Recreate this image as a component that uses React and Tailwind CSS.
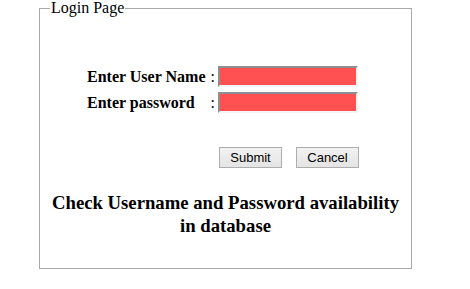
import React from 'react';

const serif = { fontFamily: '"Liberation Serif", "Times New Roman", serif' };

const Field = ({ label, type = 'text' }) => (
  <div className="flex items-center h-[21px]">
    <label className="w-[131px] shrink-0 flex justify-between pr-[3px] text-[16px] font-bold text-black whitespace-nowrap">
      <span>{label}</span>
      <span className="font-normal">:</span>
    </label>
    <input
      type={type}
      className="w-[140px] h-[21px] bg-[#ff5151] border-2 border-t-[#8f8f8f] border-l-[#8f8f8f] border-r-[#f4f4f4] border-b-[#f4f4f4] outline-none"
    />
  </div>
);

const LoginPage = () => {
  return (
    <div className="w-[470px] h-[289px] bg-white" style={serif}>
      <fieldset className="ml-[39px] w-[373px] min-w-0 h-[269px] border border-[#a9a9a9] px-[10px]">
        <legend className="px-[1px] text-[16px] leading-[16px] text-black">Login Page</legend>

        <div className="ml-[37px] mt-[50px] flex flex-col gap-[5px]">
          <Field label="Enter User Name" />
          <Field label="Enter password" type="password" />
        </div>

        <div className="ml-[169px] mt-[34px] flex gap-[14px]" style={{ fontFamily: '"Liberation Sans", Arial, sans-serif' }}>
          <button className="w-[63px] h-[21px] text-[13px] text-black border border-[#adadad] bg-gradient-to-b from-[#f2f2f2] to-[#e4e4e4]">
            Submit
          </button>
          <button className="w-[63px] h-[21px] text-[13px] text-black border border-[#adadad] bg-gradient-to-b from-[#f2f2f2] to-[#e4e4e4]">
            Cancel
          </button>
        </div>

        <h3 className="mt-[23px] text-center text-[18.72px] leading-[23px] font-bold text-black whitespace-nowrap">
          Check Username and Password availability
          <br />
          in database
        </h3>
      </fieldset>
    </div>
  );
};

export default function App() {
  return <LoginPage />;
}
